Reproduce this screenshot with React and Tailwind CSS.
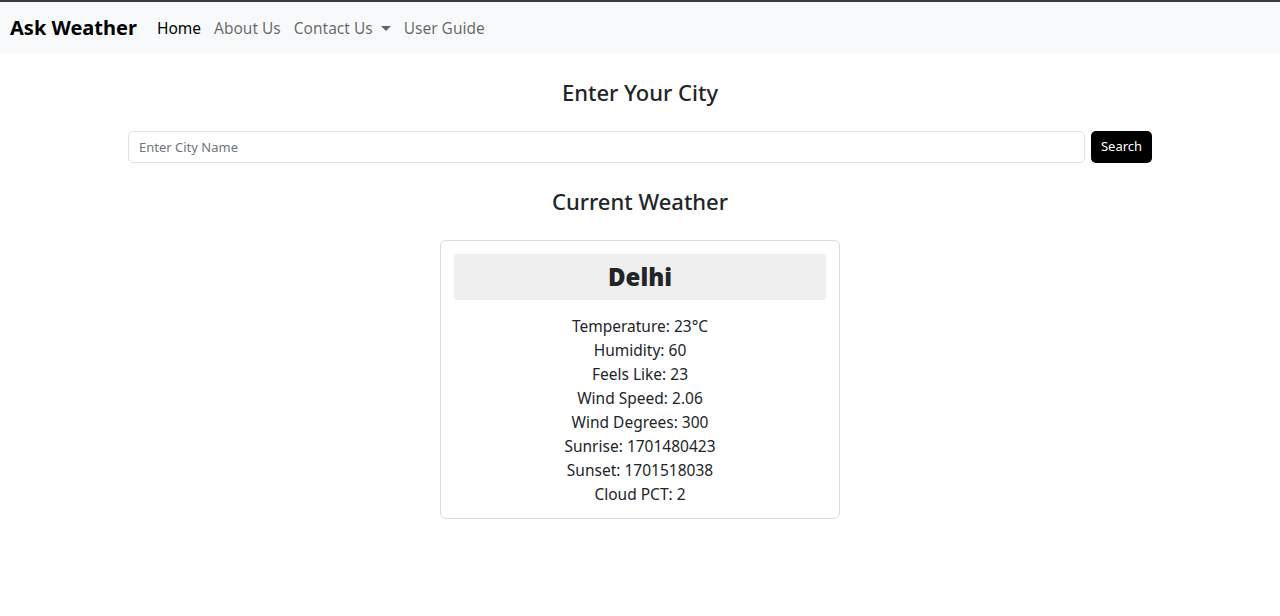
import { useState } from 'react';

const NavBar = () => (
  <nav className="bg-[#f8f9fa] border-t-2 border-[#3a3a3a] h-[53px] flex items-center px-[10px]">
    <span className="text-[20px] font-bold text-black mr-[20px]">Ask Weather</span>
    <ul className="flex items-center gap-[13px] text-[15.5px] pt-[2px]">
      <li className="text-black">Home</li>
      <li className="text-[rgba(0,0,0,0.6)]">About Us</li>
      <li className="text-[rgba(0,0,0,0.6)] flex items-center">
        Contact Us
        {/* caret */}
        <span className="ml-[8px] inline-block w-0 h-0 border-l-[5px] border-r-[5px] border-t-[5px] border-l-transparent border-r-transparent border-t-[rgba(0,0,0,0.6)]"></span>
      </li>
      <li className="text-[rgba(0,0,0,0.6)]">User Guide</li>
    </ul>
  </nav>
);

const WeatherCard = ({ city, data }) => (
  <div className="w-[400px] border border-[#dcdcdc] rounded-[6px] p-[13px] pb-[12px]">
    <div className="bg-[#efefef] rounded-[3px] h-[46px] flex items-center justify-center">
      <h2 className="text-[24px] font-black text-[#212529]">{city}</h2>
    </div>
    <div className="mt-[14px] flex flex-col items-center text-[15.5px] leading-[24px] text-[#212529]">
      {data.map(([label, value]) => (
        <p key={label}>{label}: {value}</p>
      ))}
    </div>
  </div>
);

export default function App() {
  const [city, setCity] = useState('');

  const data = [
    ['Temperature', '23°C'],
    ['Humidity', '60'],
    ['Feels Like', '23'],
    ['Wind Speed', '2.06'],
    ['Wind Degrees', '300'],
    ['Sunrise', '1701480423'],
    ['Sunset', '1701518038'],
    ['Cloud PCT', '2'],
  ];

  return (
    <div className="min-h-screen bg-white font-['Noto_Sans',sans-serif] text-[#212529]">
      <NavBar />

      <main className="w-[1024px] mx-auto flex flex-col items-center">
        <h3 className="text-[22px] leading-[30px] font-medium mt-[24px]">Enter Your City</h3>

        <form className="w-full flex gap-[6px] mt-[24px]" onSubmit={(e) => e.preventDefault()}>
          <input
            type="text"
            value={city}
            onChange={(e) => setCity(e.target.value)}
            placeholder="Enter City Name"
            className="flex-1 h-[32px] border border-[#dee2e6] rounded-[5px] px-[10px] text-[13px] placeholder:text-[#6c757d] outline-none"
          />
          <button type="submit" className="w-[61px] h-[32px] bg-black text-white text-[13px] rounded-[5px]">
            Search
          </button>
        </form>

        <h3 className="text-[22px] leading-[30px] font-medium mt-[23px]">Current Weather</h3>

        <div className="mt-[24px]">
          <WeatherCard city="Delhi" data={data} />
        </div>
      </main>
    </div>
  );
}
